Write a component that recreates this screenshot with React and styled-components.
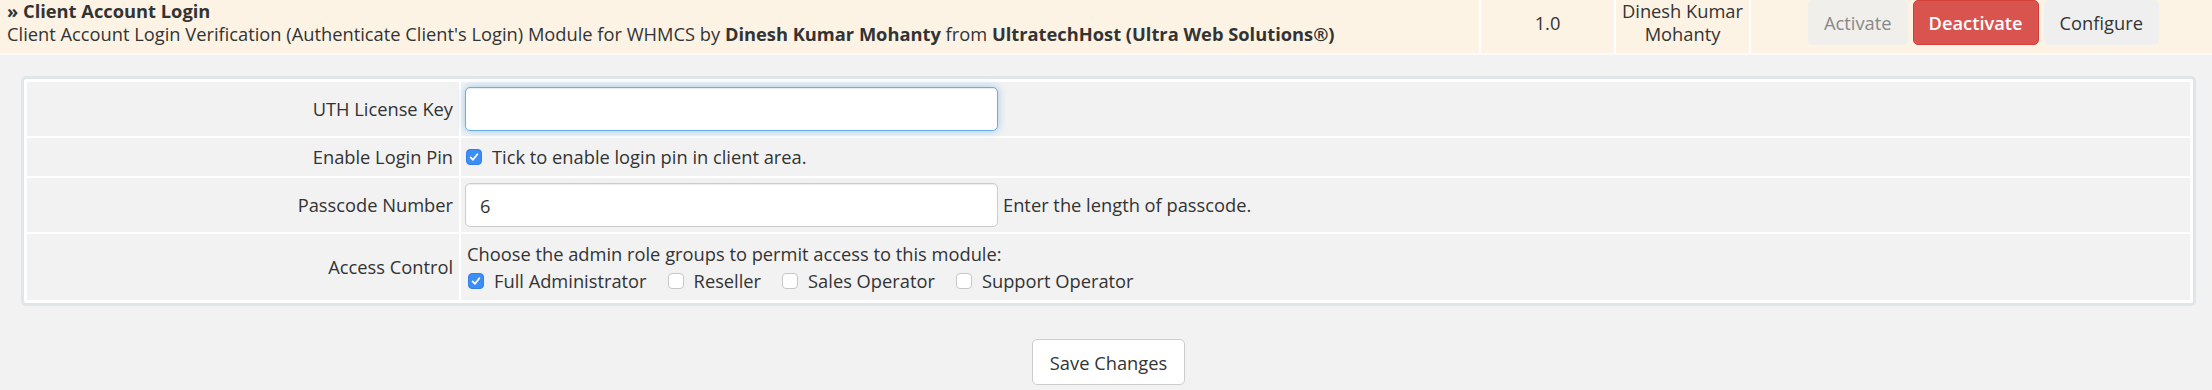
import React from "react";
import styled, { createGlobalStyle } from "styled-components";

const GlobalStyle = createGlobalStyle`
  html, body {
    margin: 0;
    padding: 0;
    background: #f2f2f2;
    font-family: "Open Sans", "DejaVu Sans", sans-serif;
    font-size: 18.3px;
    color: #333;
  }
`;

const Check = ({ checked }) => (
  <Box checked={checked}>
    {checked && (
      <svg width="12" height="12" viewBox="0 0 12 12">
        <path d="M2.6 6.4 L5 8.8 L9.4 3.2" fill="none" stroke="#fff" strokeWidth="1.8" strokeLinecap="round" strokeLinejoin="round" />
      </svg>
    )}
  </Box>
);

const roles = [
  { name: "Full Administrator", checked: true },
  { name: "Reseller", checked: false },
  { name: "Sales Operator", checked: false },
  { name: "Support Operator", checked: false },
];

function App() {
  return (
    <Page>
      <GlobalStyle />
      <ModuleRow>
        <DescCell>
          <Title>» Client Account Login</Title>
          <div>
            Client Account Login Verification (Authenticate Client's Login) Module for WHMCS by{" "}
            <b>Dinesh Kumar Mohanty</b> from <b>UltratechHost (Ultra Web Solutions®)</b>
          </div>
        </DescCell>
        <SmallCell>1.0</SmallCell>
        <SmallCell>Dinesh Kumar<br />Mohanty</SmallCell>
        <ActionsCell>
          <Button variant="disabled">Activate</Button>
          <Button variant="danger">Deactivate</Button>
          <Button variant="light">Configure</Button>
        </ActionsCell>
      </ModuleRow>

      <Body>
        <Panel>
          <FormGrid>
            <Label>UTH License Key</Label>
            <Field>
              <Input focused />
            </Field>

            <Label>Enable Login Pin</Label>
            <Field>
              <CheckLabel>
                <Check checked />
                Tick to enable login pin in client area.
              </CheckLabel>
            </Field>

            <Label>Passcode Number</Label>
            <Field>
              <Input defaultValue="6" />
              <Hint>Enter the length of passcode.</Hint>
            </Field>

            <Label>Access Control</Label>
            <Field column>
              <div>Choose the admin role groups to permit access to this module:</div>
              <RoleList>
                {roles.map((r) => (
                  <CheckLabel key={r.name}>
                    <Check checked={r.checked} />
                    {r.name}
                  </CheckLabel>
                ))}
              </RoleList>
            </Field>
          </FormGrid>
        </Panel>
        <SaveRow>
          <SaveButton>Save Changes</SaveButton>
        </SaveRow>
      </Body>
    </Page>
  );
}

export default App;

const Page = styled.div`
  width: 2212px;
`;

const ModuleRow = styled.div`
  display: flex;
  height: 53px;
  background: #fcf3e5;
  border-bottom: 2px solid #fbfaf7;
  line-height: 23px;
`;

const DescCell = styled.div`
  width: 1472px;
  padding: 0 0 10px 7px;
  border-right: 2px solid #fff;
  display: flex;
  flex-direction: column;
  justify-content: center;
`;

const Title = styled.div`
  font-weight: 700;
`;

const SmallCell = styled.div`
  width: 133px;
  padding-bottom: 9px;
  border-right: 2px solid #fff;
  display: flex;
  align-items: center;
  justify-content: center;
  text-align: center;
`;

const ActionsCell = styled.div`
  flex: 1;
  display: flex;
  align-items: center;
  justify-content: center;
  gap: 5px;
  padding: 0 0 9px 4px;
`;

const Button = styled.span`
  display: inline-flex;
  align-items: center;
  justify-content: center;
  height: 45px;
  box-sizing: border-box;
  padding: 0 15px;
  border-radius: 5px;
  font-size: 18.3px;
  border: 1px solid transparent;
  background: ${(p) => (p.variant === "danger" ? "#d9534f" : p.variant === "disabled" ? "#f0efec" : "#efefef")};
  border-color: ${(p) => (p.variant === "danger" ? "#d43f3a" : "transparent")};
  color: ${(p) => (p.variant === "danger" ? "#fff" : p.variant === "disabled" ? "#888" : "#333")};
  font-weight: ${(p) => (p.variant === "danger" ? 600 : 400)};
`;

const Body = styled.div`
  padding: 21px 16px 0 21px;
`;

const Panel = styled.div`
  border: 3px solid #e0e5e8;
  border-radius: 5px;
  background: #fff;
  padding: 1px;
`;

const FormGrid = styled.div`
  display: grid;
  grid-template-columns: 432px 1fr;
  gap: 2px;
  padding: 2px;
  background: #fff;
`;

const Label = styled.div`
  background: #f2f2f2;
  display: flex;
  align-items: center;
  justify-content: flex-end;
  padding: 0 6px;
  line-height: 26px;
`;

const Field = styled.div`
  background: #f2f2f2;
  display: flex;
  flex-direction: ${(p) => (p.column ? "column" : "row")};
  align-items: ${(p) => (p.column ? "flex-start" : "center")};
  padding: ${(p) => (p.column ? "6px 4px 6px 6px" : "5px 4px")};
  line-height: ${(p) => (p.column ? "27px" : "26px")};
  min-height: 28px;
`;

const Input = styled.input`
  width: 533px;
  height: 44px;
  box-sizing: border-box;
  border-radius: 5px;
  padding: 0 14px;
  font-family: inherit;
  font-size: 18.3px;
  color: #333;
  background: #fff;
  outline: none;
  border: 1px solid ${(p) => (p.focused ? "#66afe9" : "#ccc")};
  box-shadow: ${(p) =>
    p.focused
      ? "inset 0 1px 1px rgba(0,0,0,.075), 0 0 8px rgba(102,175,233,.6)"
      : "inset 0 1px 1px rgba(0,0,0,.075)"};
`;

const Hint = styled.span`
  margin-left: 5px;
`;

const CheckLabel = styled.label`
  display: inline-flex;
  align-items: center;
  gap: 10px;
  padding-left: 1px;
`;

const Box = styled.span`
  width: 16px;
  height: 16px;
  box-sizing: border-box;
  border-radius: 4px;
  display: inline-flex;
  align-items: center;
  justify-content: center;
  background: ${(p) => (p.checked ? "#3b8ef6" : "#fff")};
  border: 1px solid ${(p) => (p.checked ? "#3580e8" : "#c6c6c6")};
`;

const RoleList = styled.div`
  display: flex;
  gap: 20px;
`;

const SaveRow = styled.div`
  display: flex;
  justify-content: center;
  padding-top: 33px;
`;

const SaveButton = styled.button`
  height: 46px;
  width: 153px;
  font-family: inherit;
  font-size: 18.3px;
  color: #333;
  background: #fff;
  border: 1px solid #ccc;
  border-radius: 5px;
`;
